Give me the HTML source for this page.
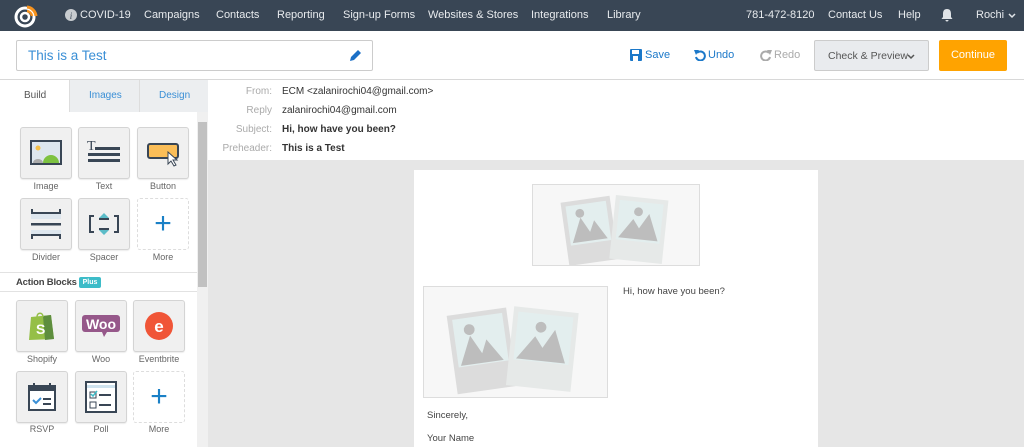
<!DOCTYPE html>
<html><head><meta charset="utf-8"><style>
*{box-sizing:border-box;margin:0;padding:0}
body{width:1024px;height:447px;overflow:hidden;font-family:"Liberation Sans",Arial,sans-serif;background:#fff;position:relative;color:#333}
.abs{position:absolute}
.nav{left:0;top:0;width:1024px;height:31px;background:#394655;color:#e8ebee;font-size:11px;font-weight:normal}
.nav span{position:absolute;top:9px;white-space:nowrap}
.bar{left:0;top:31px;width:1024px;height:49px;background:#fff;border-bottom:1px solid #d8d8d8}
.tile{position:absolute;width:52px;height:52px;background:#f0f0f0;border:1px solid #d4d4d4;border-radius:3px;box-shadow:0 1px 1px rgba(0,0,0,.08)}
.tile.more{background:#fff;border:1px dashed #ddd;box-shadow:none}
.lbl{position:absolute;font-size:9px;color:#666;text-align:center;width:60px}
.hl{position:absolute;font-size:10px;color:#aaa;text-align:right;width:80px;left:192px}
.hv{position:absolute;font-size:10px;color:#333;left:282px}
.plus{position:absolute;left:0;top:0;width:100%;height:100%;text-align:center;line-height:50px;font-size:30px;color:#1a80c6}
</style></head><body>
<div class="abs nav">
 <svg class="abs" style="left:13px;top:3px" width="26" height="26" viewBox="0 0 26 26"><circle cx="12" cy="14" r="9" fill="none" stroke="#fff" stroke-width="3"/><circle cx="12" cy="14" r="4" fill="none" stroke="#fff" stroke-width="2.5"/><path d="M14 4a10 10 0 0 1 9 9" fill="none" stroke="#f7931e" stroke-width="3"/><path d="M14 8a6 6 0 0 1 5 5" fill="none" stroke="#f7931e" stroke-width="2.5"/></svg>
 <svg class="abs" style="left:65px;top:9px" width="12" height="12"><circle cx="6" cy="6" r="6" fill="#c8ccd0"/><text x="6" y="10" font-size="9" text-anchor="middle" fill="#394655" font-style="italic" font-family="Liberation Serif">i</text></svg>
 <span style="left:80px">COVID-19</span><span style="left:144px">Campaigns</span><span style="left:216px">Contacts</span><span style="left:277px">Reporting</span><span style="left:343px">Sign-up Forms</span><span style="left:428px">Websites &amp; Stores</span><span style="left:531px">Integrations</span><span style="left:607px">Library</span>
 <span style="left:746px">781-472-8120</span><span style="left:828px">Contact Us</span><span style="left:898px">Help</span>
 <svg class="abs" style="left:941px;top:8px" width="12" height="14"><path d="M6 1c-3 0-4 2-4 5v3l-1.5 2h11L10 9V6c0-3-1-5-4-5z M4.5 12a1.5 1.5 0 0 0 3 0z" fill="#dfe3e7"/></svg>
 <span style="left:976px">Rochi</span>
 <svg class="abs" style="left:1008px;top:13px" width="8" height="6"><path d="M1 1l3 3 3-3" fill="none" stroke="#dfe3e7" stroke-width="1.5"/></svg>
</div>
<div class="abs bar"></div>
<div class="abs" style="left:16px;top:40px;width:357px;height:31px;border:1px solid #ccc;border-radius:2px;font-size:13.5px;color:#3a8fd6;padding:7px 11px">This is a Test
 <svg class="abs" style="right:10px;top:8px" width="13" height="13"><path d="M1 12l1-4 7-7 3 3-7 7z" fill="#1b6fc6"/></svg></div>
<svg class="abs" style="left:630px;top:49px" width="12" height="12"><rect x="0" y="0" width="12" height="12" rx="1" fill="#1b78c9"/><rect x="2" y="1" width="7" height="4" fill="#fff"/><rect x="3" y="7" width="5" height="5" fill="#fff"/></svg>
<div class="abs" style="left:645px;top:49px;font-size:11px;color:#1b78c9">Save</div>
<svg class="abs" style="left:694px;top:49px" width="12" height="12"><path d="M3 4a4.5 4.5 0 1 1 -1 4" fill="none" stroke="#1b78c9" stroke-width="2"/><path d="M0 1l5 0 -3 5z" fill="#1b78c9"/></svg>
<div class="abs" style="left:708px;top:49px;font-size:11px;color:#1b78c9">Undo</div>
<svg class="abs" style="left:760px;top:49px" width="12" height="12"><path d="M9 4a4.5 4.5 0 1 0 1 4" fill="none" stroke="#aaa" stroke-width="2"/><path d="M12 1l-5 0 3 5z" fill="#aaa"/></svg>
<div class="abs" style="left:774px;top:49px;font-size:11px;color:#aaa">Redo</div>
<div class="abs" style="left:814px;top:40px;width:115px;height:31px;background:#e9ebee;border:1px solid #ccc;border-radius:2px;font-size:10.5px;color:#555;padding:9px 0 0 13px;white-space:nowrap">Check &amp; Preview</div>
<svg class="abs" style="left:907px;top:54px" width="8" height="6"><path d="M1 1l3 3 3-3" fill="none" stroke="#555" stroke-width="1.5"/></svg>
<div class="abs" style="left:939px;top:40px;width:68px;height:31px;background:#ffa300;border-radius:2px;font-size:11px;color:#fff;text-align:center;padding-top:9px">Continue</div>

<div class="abs" style="left:0;top:80px;width:208px;height:367px;background:#fff;border-right:1px solid #ddd"></div>
<div class="abs" style="left:69px;top:80px;width:139px;height:32px;background:#eceef0;border-left:1px solid #ddd"></div>
<div class="abs" style="left:139px;top:80px;width:1px;height:32px;background:#ddd"></div>
<div class="abs" style="left:24px;top:90px;font-size:10px;color:#555">Build</div>
<div class="abs" style="left:89px;top:90px;font-size:10px;color:#3a8fd6">Images</div>
<div class="abs" style="left:159px;top:90px;font-size:10px;color:#3a8fd6">Design</div>
<div class="abs" style="left:197px;top:112px;width:11px;height:335px;background:#f0f0f0"></div>
<div class="abs" style="left:198px;top:122px;width:9px;height:165px;background:#c1c1c1"></div>

<div class="tile" style="left:20px;top:127px"><svg width="50" height="50"><rect x="10" y="13" width="30" height="23" fill="#dde6ee" stroke="#394655" stroke-width="2"/><circle cx="17" cy="20" r="2.5" fill="#f5c04a"/><path d="M22 35a8 8 0 0 1 16 0z" fill="#7dc241"/><path d="M12 35a5 4 0 0 1 10 0z" fill="#aaa"/></svg></div>
<div class="tile" style="left:78px;top:127px"><svg width="50" height="50"><text x="8" y="22" font-size="14" fill="#394655" font-family="Liberation Serif">T</text><rect x="16" y="19" width="25" height="3" fill="#394655"/><rect x="9" y="25" width="32" height="3" fill="#394655"/><rect x="9" y="31" width="32" height="3" fill="#394655"/></svg></div>
<div class="tile" style="left:137px;top:127px"><svg width="50" height="50"><rect x="10" y="16" width="30" height="14" rx="2" fill="#fbbe58" stroke="#394655" stroke-width="2"/><path d="M30 24l0 12 3-3 3 5 2-1-3-5 4 0z" fill="#fff" stroke="#394655" stroke-width="1"/></svg></div>
<div class="lbl" style="left:16px;top:181px">Image</div><div class="lbl" style="left:74px;top:181px">Text</div><div class="lbl" style="left:133px;top:181px">Button</div>
<div class="tile" style="left:20px;top:198px"><svg width="50" height="50"><rect x="10" y="14" width="30" height="6" fill="#dde6ee"/><rect x="10" y="31" width="30" height="6" fill="#dde6ee"/><path d="M11 10v4h28v-4M11 40v-4h28v4" fill="none" stroke="#394655" stroke-width="2"/><rect x="10" y="24" width="30" height="2.5" fill="#394655"/></svg></div>
<div class="tile" style="left:78px;top:198px"><svg width="50" height="50"><path d="M15 17h-4v16h4M35 17h4v16h-4" fill="none" stroke="#394655" stroke-width="2"/><path d="M25 14l5 5h-10z M25 36l5-5h-10z" fill="#5bbcc8"/><rect x="20" y="19" width="10" height="2" fill="#394655"/><rect x="20" y="29" width="10" height="2" fill="#394655"/></svg></div>
<div class="tile more" style="left:137px;top:198px"><div class="plus">+</div></div>
<div class="lbl" style="left:16px;top:252px">Divider</div><div class="lbl" style="left:74px;top:252px">Spacer</div><div class="lbl" style="left:133px;top:252px">More</div>

<div class="abs" style="left:0;top:272px;width:197px;height:20px;border-top:1px solid #e2e2e2;border-bottom:1px solid #e2e2e2;background:#fff"></div>
<div class="abs" style="left:16px;top:277px;font-size:9.5px;font-weight:bold;color:#444;letter-spacing:-0.2px">Action Blocks</div>
<div class="abs" style="left:79px;top:277px;width:22px;height:11px;background:#3dbcc8;border-radius:2px;font-size:7px;color:#fff;text-align:center;line-height:11px;font-weight:bold">Plus</div>

<div class="tile" style="left:16px;top:300px"><svg width="50" height="50"><path d="M14 16l20-2 3 24-25 1z" fill="#95bf47"/><path d="M26 15l8-1 3 24-9 1z" fill="#5e8e3e"/><path d="M20 16c0-5 6-5 6 0" fill="none" stroke="#95bf47" stroke-width="1.5"/><text x="19" y="33" font-size="14" fill="#fff" font-weight="bold">S</text></svg></div>
<div class="tile" style="left:75px;top:300px"><svg width="50" height="50"><rect x="6" y="14" width="38" height="17" rx="3" fill="#96588a"/><path d="M26 31l2 5 3-5z" fill="#96588a"/><text x="25" y="28" font-size="14" fill="#fff" text-anchor="middle" font-weight="bold">Woo</text></svg></div>
<div class="tile" style="left:133px;top:300px"><svg width="50" height="50"><circle cx="25" cy="25" r="14" fill="#f05537"/><text x="25" y="31" font-size="17" fill="#fff" text-anchor="middle" font-weight="bold">e</text></svg></div>
<div class="lbl" style="left:12px;top:354px">Shopify</div><div class="lbl" style="left:71px;top:354px">Woo</div><div class="lbl" style="left:129px;top:354px">Eventbrite</div>
<div class="tile" style="left:16px;top:371px"><svg width="50" height="50"><rect x="12" y="14" width="26" height="24" fill="#fff" stroke="#394655" stroke-width="2"/><rect x="12" y="14" width="26" height="5" fill="#394655"/><path d="M17 11v5M33 11v5" stroke="#394655" stroke-width="2"/><path d="M16 28l3 3 5-5" fill="none" stroke="#3a8fd6" stroke-width="2"/><path d="M26 27h8M26 32h8" stroke="#394655" stroke-width="2"/></svg></div>
<div class="tile" style="left:75px;top:371px"><svg width="50" height="50"><rect x="10" y="10" width="30" height="30" fill="#fff" stroke="#394655" stroke-width="2"/><rect x="11" y="13" width="28" height="3" fill="#cfe3ef"/><rect x="14" y="20" width="6" height="6" fill="none" stroke="#394655"/><path d="M15 22l2 2 4-5" fill="none" stroke="#3dbcc8" stroke-width="1.5"/><rect x="14" y="30" width="6" height="6" fill="none" stroke="#394655"/><path d="M23 23h12M23 33h12" stroke="#394655" stroke-width="2"/></svg></div>
<div class="tile more" style="left:133px;top:371px"><div class="plus">+</div></div>
<div class="lbl" style="left:12px;top:424px">RSVP</div><div class="lbl" style="left:71px;top:424px">Poll</div><div class="lbl" style="left:129px;top:424px">More</div>

<div class="hl" style="top:86px">From:</div><div class="hv" style="top:86px">ECM &lt;zalanirochi04@gmail.com&gt;</div>
<div class="hl" style="top:105px">Reply</div><div class="hv" style="top:105px">zalanirochi04@gmail.com</div>
<div class="hl" style="top:124px">Subject:</div><div class="hv" style="top:124px;font-weight:bold">Hi, how have you been?</div>
<div class="hl" style="top:143px">Preheader:</div><div class="hv" style="top:143px;font-weight:bold">This is a Test</div>
<div class="abs" style="left:208px;top:160px;width:816px;height:287px;background:#e6e6e6"></div>
<div class="abs" style="left:414px;top:170px;width:404px;height:277px;background:#fff"></div>

<div class="abs" style="left:532px;top:184px;width:168px;height:82px;background:#f7f7f7;border:1px solid #ddd">
<svg width="166" height="80" viewBox="0 0 166 80"><g transform="translate(83,41) scale(1.1)"><g transform="rotate(-8)"><rect x="-47" y="-28" width="45" height="58" fill="#dcdcdc"/><rect x="-43" y="-24" width="37" height="36" fill="#e3eeee"/><path d="M-41 10l10-22 7 14 5-10 10 18z" fill="#bdbdbd"/><circle cx="-31" cy="-16" r="4" fill="#bdbdbd"/></g><g transform="rotate(6)"><rect x="-3" y="-28" width="48" height="58" fill="#e6e9e8"/><rect x="1" y="-24" width="40" height="36" fill="#e3eeee"/><path d="M3 10l12-18 6 8 8-14 10 24z" fill="#bdbdbd"/><circle cx="19" cy="-15" r="4" fill="#bdbdbd"/></g></g></svg></div>
<div class="abs" style="left:423px;top:286px;width:185px;height:112px;background:#f7f7f7;border:1px solid #ddd">
<svg width="183" height="110" viewBox="0 0 183 110"><g transform="translate(91,58) scale(1.2)"><g transform="rotate(-8)"><rect x="-53" y="-32" width="50" height="66" fill="#dcdcdc"/><rect x="-49" y="-28" width="42" height="40" fill="#e3eeee"/><path d="M-47 11l11-24 8 16 5-11 12 19z" fill="#bdbdbd"/><circle cx="-36" cy="-18" r="4.5" fill="#bdbdbd"/></g><g transform="rotate(6)"><rect x="-4" y="-32" width="54" height="66" fill="#e6e9e8"/><rect x="0" y="-28" width="46" height="40" fill="#e3eeee"/><path d="M2 11l14-20 7 9 9-16 11 27z" fill="#bdbdbd"/><circle cx="20" cy="-17" r="4.5" fill="#bdbdbd"/></g></g></svg></div>
<div class="abs" style="left:623px;top:286px;font-size:9.5px;color:#444">Hi, how have you been?</div>
<div class="abs" style="left:427px;top:410px;font-size:9.5px;color:#444">Sincerely,</div>
<div class="abs" style="left:427px;top:433px;font-size:9.5px;color:#444">Your Name</div>
</body></html>
